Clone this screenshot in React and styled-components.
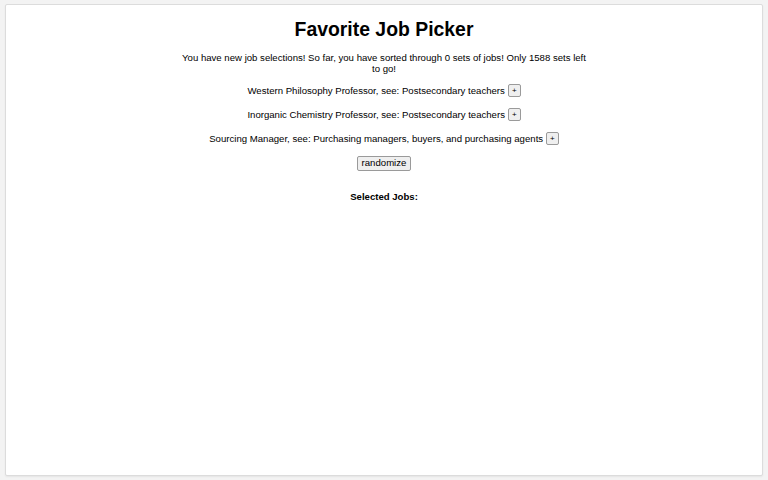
import React from "react";
import styled, { createGlobalStyle } from "styled-components";

const Global = createGlobalStyle`
  html, body { margin: 0; padding: 0; background: #f3f3f3; }
  body { font-family: "Liberation Sans", Arial, sans-serif; color: #000; }
`;

const Page = styled.div`
  padding: 4px 5px 4px 5px;
  height: 480px;
  box-sizing: border-box;
`;

const Card = styled.main`
  background: #fff;
  border: 1px solid #dcdcdc;
  border-radius: 2px;
  box-shadow: 0 1px 2px rgba(0, 0, 0, 0.06);
  height: 100%;
  box-sizing: border-box;
  display: flex;
  flex-direction: column;
  align-items: center;
  padding-top: 14px;
`;

const Title = styled.h1`
  margin: 0 0 13px;
  font-size: 19.4px;
  line-height: 20px;
  font-weight: bold;
`;

const Intro = styled.p`
  margin: 0 0 4px;
  width: 408px;
  text-align: center;
  font-size: 9.6px;
  line-height: 11px;
`;

const Row = styled.div`
  display: flex;
  align-items: center;
  justify-content: center;
  gap: 3px;
  font-size: 9.6px;
  line-height: 13px;
  height: 24px;
  padding-top: ${(p) => (p.$drop ? "2px" : "0")};
  box-sizing: border-box;
`;

const SmallButton = styled.button`
  font-family: "Liberation Sans", Arial, sans-serif;
  font-size: ${(p) => (p.$wide ? "9.6px" : "8px")};
  line-height: 10px;
  padding: ${(p) => (p.$wide ? "1px 4px" : "1px 3px")};
  background: #efefef;
  border: 1px solid #9a9a9a;
  border-radius: 2px;
  color: #000;
  height: ${(p) => (p.$wide ? "15px" : "13px")};
  box-sizing: border-box;
`;

const Heading = styled.h2`
  margin: 17px 0 0;
  font-size: 9.6px;
  line-height: 12px;
  font-weight: bold;
`;

const jobs = [
  ["Western Philosophy Professor", "Postsecondary teachers"],
  ["Inorganic Chemistry Professor", "Postsecondary teachers"],
  ["Sourcing Manager", "Purchasing managers, buyers, and purchasing agents"],
];

export default function App() {
  return (
    <>
      <Global />
      <Page>
        <Card>
          <Title>Favorite Job Picker</Title>
          <Intro>
            You have new job selections! So far, you have sorted through 0 sets
            of jobs! Only 1588 sets left to go!
          </Intro>
          {jobs.map(([name, see]) => (
            <Row key={name}>
              <span>
                {name}, see: {see}
              </span>
              <SmallButton>+</SmallButton>
            </Row>
          ))}
          <Row $drop>
            <SmallButton $wide>randomize</SmallButton>
          </Row>
          <Heading>Selected Jobs:</Heading>
        </Card>
      </Page>
    </>
  );
}
